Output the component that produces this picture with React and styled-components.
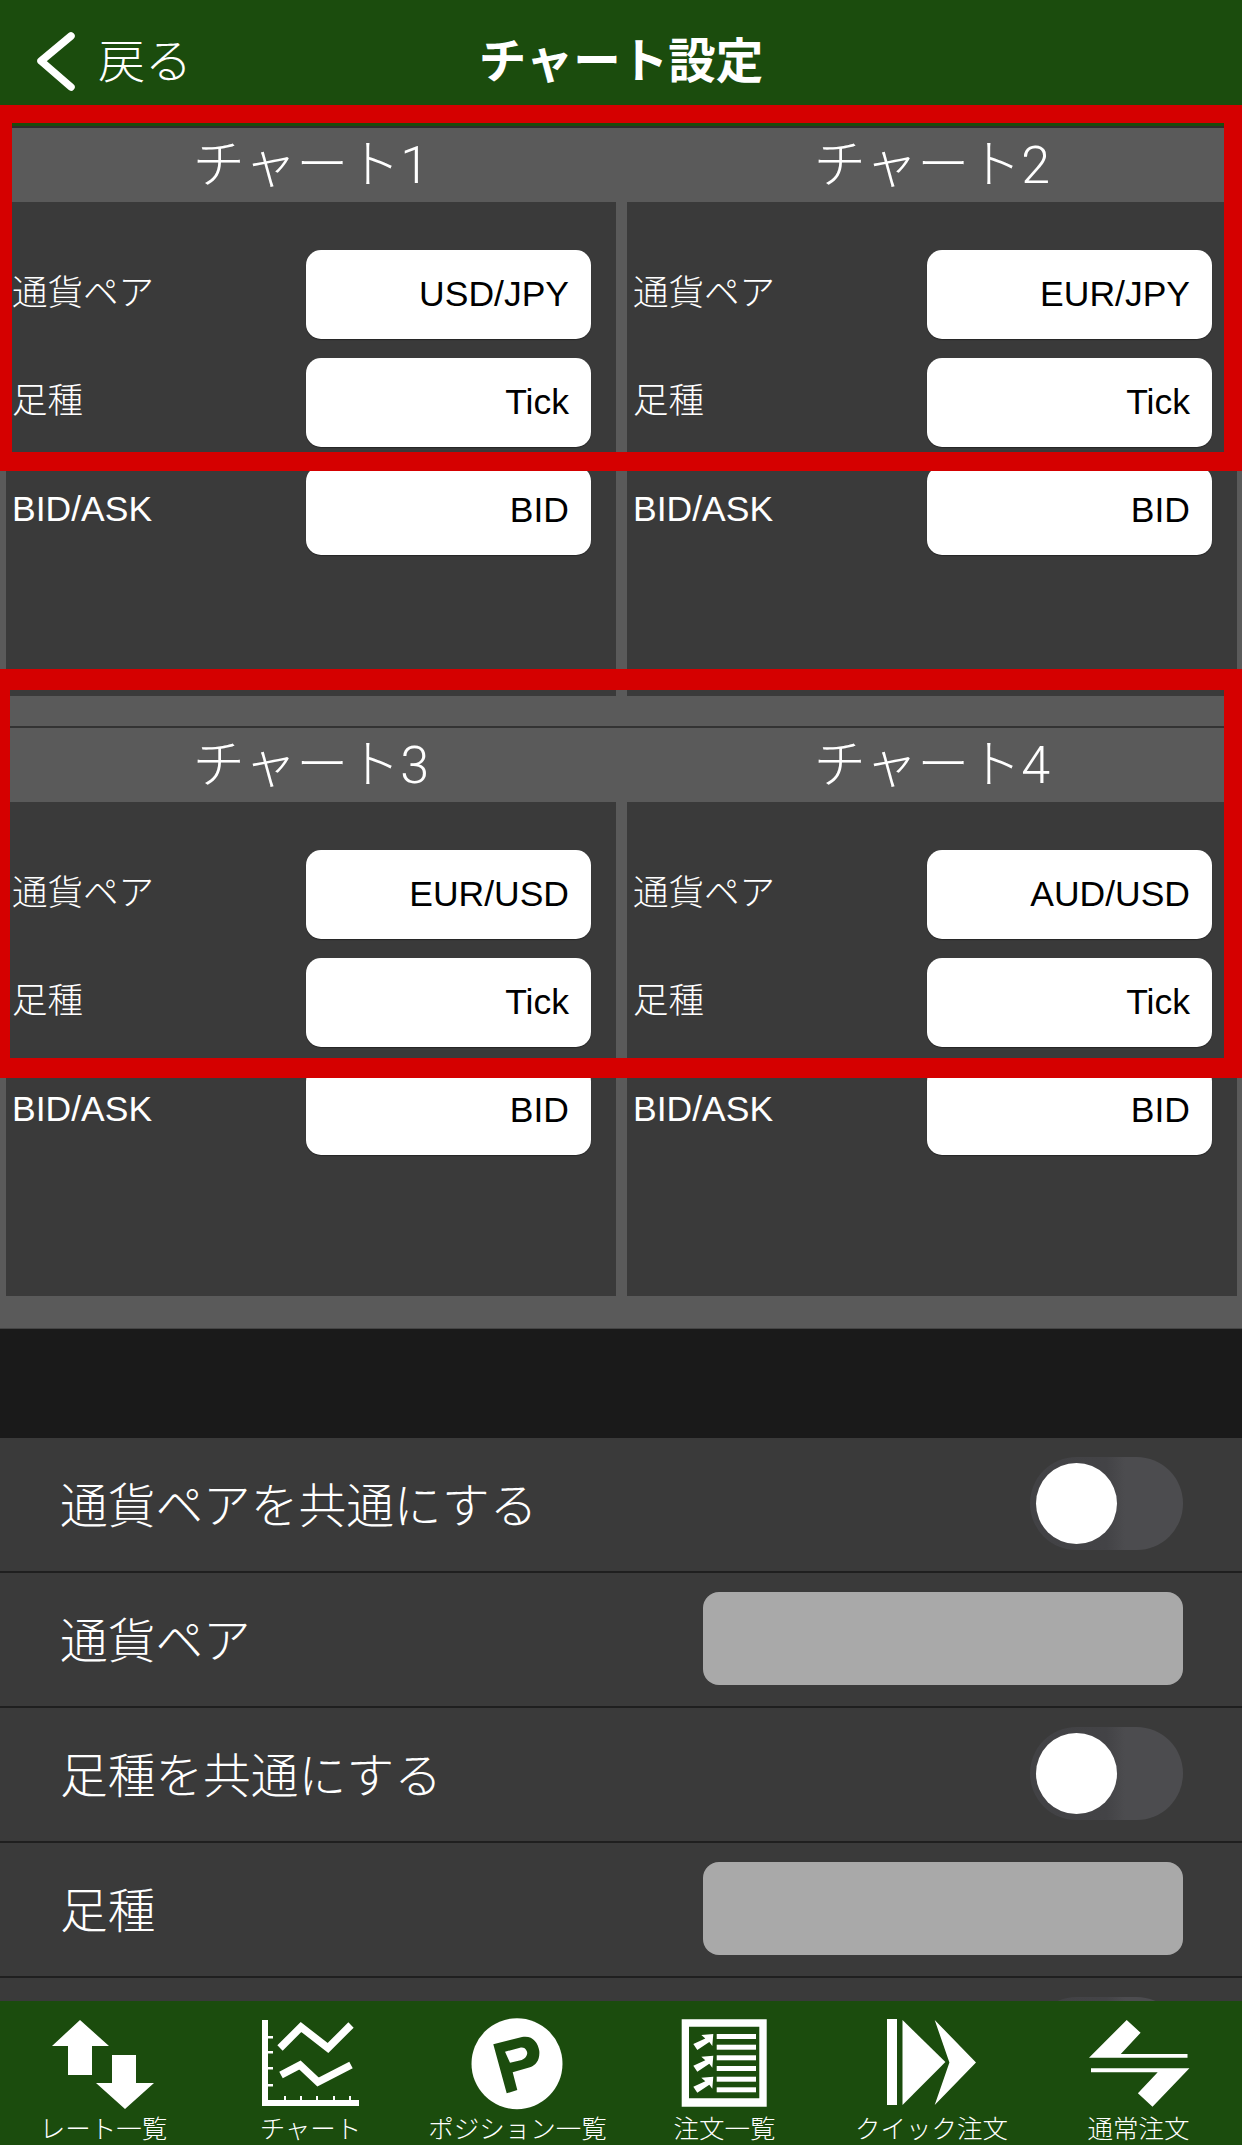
import React from 'react'
import styled, { createGlobalStyle } from 'styled-components'

const GlobalStyle = createGlobalStyle`
  html, body {
    margin: 0;
    padding: 0;
    background: #1a1a1a;
  }
  * {
    box-sizing: border-box;
  }
`

const charts = [
  [
    { title: 'チャート1', pair: 'USD/JPY', foot: 'Tick', side: 'BID' },
    { title: 'チャート2', pair: 'EUR/JPY', foot: 'Tick', side: 'BID' },
  ],
  [
    { title: 'チャート3', pair: 'EUR/USD', foot: 'Tick', side: 'BID' },
    { title: 'チャート4', pair: 'AUD/USD', foot: 'Tick', side: 'BID' },
  ],
]

const App = () => (
  <Screen>
    <GlobalStyle />
    <TopBar>
      <BackButton>
        <svg width="40" height="60" viewBox="0 0 40 60">
          <path d="M35 4 L5 29 L35 55" fill="none" stroke="#fff" strokeWidth="7.5" strokeLinecap="round" strokeLinejoin="round" />
        </svg>
        <BackLabel>戻る</BackLabel>
      </BackButton>
      <PageTitle>チャート設定</PageTitle>
    </TopBar>

    <Main>
      <ChartArea>
        {charts.map((group, i) => (
          <ChartGroup key={i} $divided={i > 0}>
            {group.map((chart) => (
              <ChartCard key={chart.title}>
                <ChartHeader>{chart.title}</ChartHeader>
                <ChartPanel>
                  <FieldRow>
                    <FieldLabel>通貨ペア</FieldLabel>
                    <FieldValue>{chart.pair}</FieldValue>
                  </FieldRow>
                  <FieldRow>
                    <FieldLabel>足種</FieldLabel>
                    <FieldValue>{chart.foot}</FieldValue>
                  </FieldRow>
                  <FieldRow>
                    <FieldLabel $latin>BID/ASK</FieldLabel>
                    <FieldValue>{chart.side}</FieldValue>
                  </FieldRow>
                </ChartPanel>
              </ChartCard>
            ))}
          </ChartGroup>
        ))}
      </ChartArea>

      <BlackBand />

      <SettingRow>
        <SettingLabel>通貨ペアを共通にする</SettingLabel>
        <Toggle><Knob /></Toggle>
      </SettingRow>
      <SettingRow>
        <SettingLabel>通貨ペア</SettingLabel>
        <DisabledField />
      </SettingRow>
      <SettingRow>
        <SettingLabel>足種を共通にする</SettingLabel>
        <Toggle><Knob /></Toggle>
      </SettingRow>
      <SettingRow>
        <SettingLabel>足種</SettingLabel>
        <DisabledField />
      </SettingRow>
      <SettingRow>
        <span />
        <Toggle><Knob /></Toggle>
      </SettingRow>
    </Main>

    <BottomNav>
      <NavItem>
        <NavIcon>
          <path d="M80 5 L109 31 L92 31 L92 60 L68 60 L68 31 L52 31 Z" />
          <path d="M112 40 L136 40 L136 68 L154 68 L125 94 L96 68 L112 68 Z" />
        </NavIcon>
        <NavLabel>レート一覧</NavLabel>
      </NavItem>
      <NavItem>
        <NavIcon>
          <path d="M55 5 H61 V85 H152 V91 H55 Z" />
          <path d="M61 21 H66 V23.5 H61 Z M61 36 H66 V38.5 H61 Z M61 52 H66 V54.5 H61 Z M61 69 H66 V71.5 H61 Z" />
          <path d="M77 81 H79 V85 H77 Z M93 81 H95 V85 H93 Z M109 81 H111 V85 H109 Z M126 81 H128 V85 H126 Z M142 81 H144 V85 H142 Z" />
          <polyline points="73,33 94,12 121,33 144,10" fill="none" stroke="#fff" strokeWidth="7.5" />
          <polyline points="74,60 93,50 111,67 144,50" fill="none" stroke="#fff" strokeWidth="7.5" />
        </NavIcon>
        <NavLabel>チャート</NavLabel>
      </NavItem>
      <NavItem>
        <NavIcon>
          <circle cx="103" cy="48.7" r="45.5" />
          <path
            fill="#1b4c0d"
            fillRule="evenodd"
            d="M79.3 29.3 L108 22 C118 20 124 27 125.3 36 C126 45 122 50 116 52.3 L98.7 57.3 L103.3 75 L92.7 78.3 Z M91 36.7 L96 47.7 L107.7 45 C113 43 114 38 112.7 36 C111.5 33 109 32 106 32.7 Z"
          />
        </NavIcon>
        <NavLabel>ポジション一覧</NavLabel>
      </NavItem>
      <NavItem>
        <NavIcon>
          <path
            fillRule="evenodd"
            d="M60.7 4.3 H145.7 V91.7 H60.7 Z M68 11.7 V83.3 H138.3 V11.7 Z"
          />
          {[19, 29.7, 40.3, 51, 61.7, 72.3].map((y) => (
            <rect key={y} x="95.7" y={y} width="39.3" height="5" />
          ))}
          {[19, 40.7, 61.7].map((y) => (
            <polygon
              key={y}
              transform={`translate(92.3 ${y})`}
              points="0,0 -12,1 -8,4.5 -20,10 -16,16 -4,8 -1,12"
            />
          ))}
        </NavIcon>
        <NavLabel>注文一覧</NavLabel>
      </NavItem>
      <NavItem>
        <NavIcon>
          <path d="M59 4 H69 V90 H59 Z" />
          <path d="M74.5 5 L117.4 47 L74.5 90 Z" />
          <path d="M106.7 5 L148 47.5 L106.7 90 L121.4 47.5 Z" />
        </NavIcon>
        <NavLabel>クイック注文</NavLabel>
      </NavItem>
      <NavItem>
        <NavIcon>
          <path d="M91.7 5 L105.6 17.7 L85.8 39 H152.5 V42.7 H54 Z" />
          <path d="M56 53.3 H154.4 L117.5 91.7 L102.9 78.3 L122.7 57.3 H56 Z" />
        </NavIcon>
        <NavLabel>通常注文</NavLabel>
      </NavItem>
    </BottomNav>

    <RedBox $top={105} $height={366} $left={12} $topW={18} $bottomW={19} />
    <RedBox $top={669} $height={409} $left={10} $topW={21} $bottomW={20} />
  </Screen>
)

const fontStack = `"Liberation Sans", "Noto Sans CJK JP", sans-serif`

const Screen = styled.div`
  position: relative;
  width: 1242px;
  height: 2145px;
  display: flex;
  flex-direction: column;
  overflow: hidden;
  background: #1a1a1a;
  font-family: ${fontStack};
  font-weight: 300;
  color: #fff;
`

const TopBar = styled.header`
  flex: none;
  height: 128px;
  display: grid;
  grid-template-columns: 1fr auto 1fr;
  align-items: center;
  padding-bottom: 3px;
  background: #1b4c0d;
  border-bottom: 2px solid #2c2c2c;
`

const BackButton = styled.div`
  display: flex;
  align-items: center;
  gap: 22px;
  padding-left: 36px;
`

const BackLabel = styled.span`
  font-size: 47px;
  line-height: 56px;
`

const PageTitle = styled.h1`
  margin: 0;
  font-size: 47.5px;
  line-height: 56px;
  font-weight: 700;
`

const Main = styled.main`
  flex: 1;
  min-height: 0;
  overflow: hidden;
`

const ChartArea = styled.section`
  padding-bottom: 32px;
  background: #5a5a5a;
  border-bottom: 1px solid #444;
`

const ChartGroup = styled.div`
  display: grid;
  grid-template-columns: 610px 610px;
  column-gap: 11px;
  padding: 0 5px 0 6px;
  margin-top: ${(p) => (p.$divided ? '30px' : '0')};
  border-top: ${(p) => (p.$divided ? '2px solid #333' : 'none')};
`

const ChartCard = styled.div`
  display: flex;
  flex-direction: column;
`

const ChartHeader = styled.h2`
  margin: 0;
  height: 74px;
  display: flex;
  align-items: center;
  justify-content: center;
  padding-bottom: 9px;
  font-family: Roboto, "Noto Sans CJK JP", sans-serif;
  font-size: 52px;
  font-weight: 300;
`

const ChartPanel = styled.div`
  height: 494px;
  display: flex;
  flex-direction: column;
  gap: 19px;
  padding: 48px 25px 0 6px;
  background: #3a3a3a;
`

const FieldRow = styled.div`
  display: flex;
  align-items: center;
  justify-content: space-between;
`

const FieldLabel = styled.span`
  position: relative;
  top: ${(p) => (p.$latin ? '-1px' : '-5px')};
  font-size: 35.5px;
`

const FieldValue = styled.div`
  width: 285px;
  height: 89px;
  display: flex;
  align-items: center;
  justify-content: flex-end;
  padding-right: 22px;
  background: #fff;
  border-radius: 15px;
  box-shadow: 0 1px 1px rgba(0, 0, 0, 0.35);
  color: #000;
  font-size: 35.5px;
`

const BlackBand = styled.div`
  height: 109px;
  background: #1a1a1a;
`

const SettingRow = styled.div`
  height: 135px;
  display: flex;
  align-items: center;
  justify-content: space-between;
  padding: 0 59px 2px 60px;
  background: #3a3a3a;
  border-bottom: 2px solid #1f1f1f;
`

const SettingLabel = styled.span`
  position: relative;
  top: -1px;
  font-size: 47.7px;
`

const Toggle = styled.div`
  width: 153px;
  height: 93px;
  display: flex;
  align-items: center;
  padding-left: 6px;
  border-radius: 47px;
  background: linear-gradient(90deg, #424245 0%, #434346 50%, #4c4c4f 62%);
`

const Knob = styled.div`
  width: 81px;
  height: 81px;
  border-radius: 50%;
  background: #fff;
`

const DisabledField = styled.div`
  width: 480px;
  height: 93px;
  background: #a9a9a9;
  border-radius: 16px;
`

const BottomNav = styled.nav`
  flex: none;
  height: 144px;
  display: grid;
  grid-template-columns: repeat(6, 1fr);
  padding-top: 14px;
  background: #1b4c0d;
`

const NavItem = styled.div`
  display: flex;
  flex-direction: column;
  align-items: center;
`

const NavSvg = styled.svg`
  display: block;
  width: 207px;
  height: 100px;
  fill: #fff;
`

const NavIcon = ({ children }) => <NavSvg viewBox="0 0 207 100">{children}</NavSvg>

const NavLabel = styled.span`
  font-size: 25.5px;
  line-height: 28px;
  white-space: nowrap;
`

const RedBox = styled.div`
  position: absolute;
  left: 0;
  right: 0;
  top: ${(p) => p.$top}px;
  height: ${(p) => p.$height}px;
  border-style: solid;
  border-color: #d50000;
  border-width: ${(p) => `${p.$topW}px 18px ${p.$bottomW}px ${p.$left}px`};
  pointer-events: none;
`

export default App
